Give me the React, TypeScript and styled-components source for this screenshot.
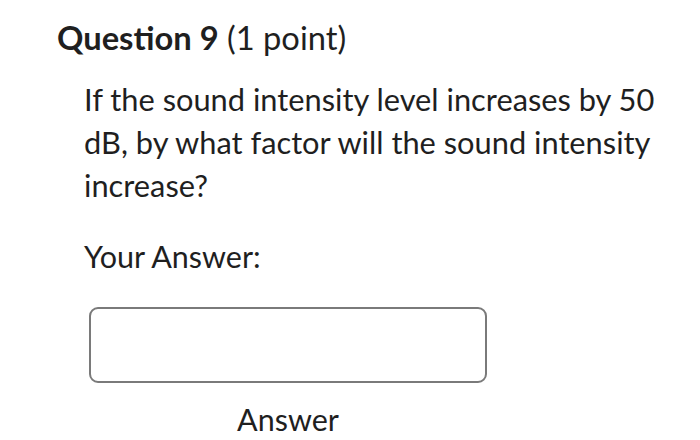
import React from "react";
import styled, { createGlobalStyle } from "styled-components";

const Global = createGlobalStyle`
  html, body { margin: 0; padding: 0; background: #fff; }
  body { font-family: Lato, "Open Sans", sans-serif; color: #1f1f1f; }
`;

const Page = styled.div`
  width: 700px;
  height: 440px;
  box-sizing: border-box;
  padding: 14px 0 0 57px;
  overflow: hidden;
`;

const Title = styled.h2`
  margin: 0;
  font-size: 32.7px;
  font-weight: 400;
  line-height: 48px;
  letter-spacing: 0;
`;

const Strong = styled.span`
  font-weight: 700;
`;

const Body = styled.div`
  padding: 16px 0 0 27px;
  width: 592px;
`;

const Prompt = styled.p`
  margin: 0;
  font-size: 30.8px;
  line-height: 43px;
`;

const Label = styled.p`
  margin: 28px 0 0;
  font-size: 30.5px;
  line-height: 43px;
`;

const Field = styled.div`
  display: flex;
  flex-direction: column;
  align-items: center;
  width: 398px;
  margin: 29px 0 0 5px;
  gap: 18px;
`;

const Box = styled.div`
  width: 100%;
  height: 76px;
  box-sizing: border-box;
  border: 2px solid #7a7a7a;
  border-radius: 9px;
  background: #fff;
`;

const Caption = styled.span`
  font-size: 30.5px;
  line-height: 36px;
`;

export default function App() {
  return (
    <>
      <Global />
      <Page>
        <Title>
          <Strong>Question 9</Strong> (1 point)
        </Title>
        <Body>
          <Prompt>
            If the sound intensity level increases by 50 dB, by what factor will the sound intensity increase?
          </Prompt>
          <Label>Your Answer:</Label>
          <Field>
            <Box />
            <Caption>Answer</Caption>
          </Field>
        </Body>
      </Page>
    </>
  );
}
